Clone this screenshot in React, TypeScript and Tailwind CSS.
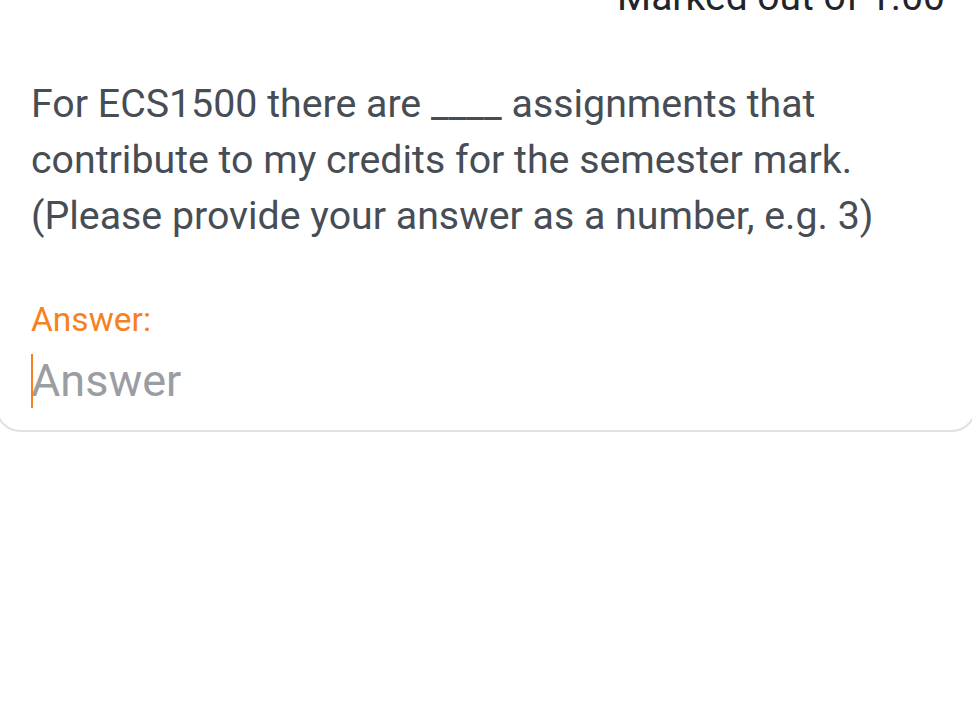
export default function App() {
  return (
    <div className="h-[728px] w-[972px] overflow-hidden bg-white font-['Roboto',sans-serif]">
      <div className="-mx-[4px] -mt-[31px] rounded-b-[24px] border-2 border-t-0 border-[#dee2e6] bg-white pb-[22px] pl-[33px] pr-[29px]">
        <div className="text-right text-[39px] leading-[56px] text-[#212529]">Marked out of 1.00</div>
        <p className="mt-[51px] text-[39.3px] leading-[56px] text-[#474d54]">
          For ECS1500 there are ____ assignments that contribute to my credits for the semester mark. (Please provide your answer as a number, e.g. 3)
        </p>
        <div className="mt-[56px] text-[33.5px] leading-[40px] text-[#f68121]">Answer:</div>
        <div className="relative mt-[14px] h-[54px] text-[45px] leading-[54px] text-[#9a9da1]">
          <span className="absolute left-0 top-0 h-[54px] w-[2px] bg-[#f68121]" />
          Answer
        </div>
      </div>
    </div>
  );
}
